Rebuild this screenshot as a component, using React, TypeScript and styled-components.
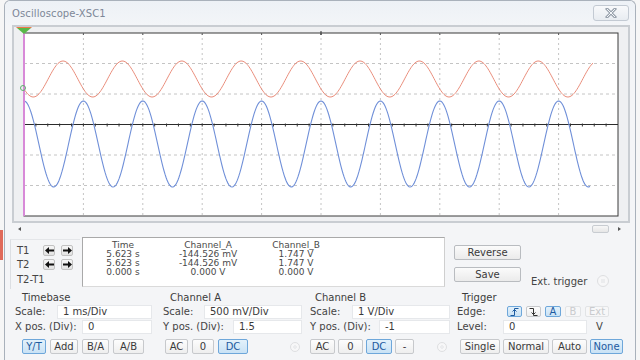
import React from 'react';
import styled, { createGlobalStyle } from 'styled-components';

const Global = createGlobalStyle`
  html, body { margin: 0; padding: 0; background: #ffffff; }
  body { font-family: "DejaVu Sans", Verdana, sans-serif; color: #3b3b3b; }
  #root { width: 640px; height: 360px; overflow: hidden; }
  * { box-sizing: border-box; }
`;

const Page = styled.div`
  width: 640px;
  height: 360px;
  display: flex;
  background: #f6f6f6;
`;

const OuterStrip = styled.div`
  width: 4px;
  display: flex;
  flex-direction: column;
  padding-top: 230px;
`;

const RedStub = styled.div`
  width: 3px;
  height: 30px;
  background: #e06a5a;
`;

const Window = styled.div`
  width: 632px;
  height: 360px;
  display: flex;
  flex-direction: column;
  border: 1px solid #a9b1bb;
  border-bottom: none;
  border-radius: 6px 6px 0 0;
  background: #f4f5f7;
`;

const TitleBar = styled.div`
  height: 24px;
  flex: none;
  display: flex;
  align-items: center;
  justify-content: space-between;
  padding: 0 6px 0 7px;
  background: linear-gradient(#edf1f6, #f3f5f8);
  border-radius: 6px 6px 0 0;
`;

const Title = styled.span`
  font-size: 10px;
  color: #7d8797;
  letter-spacing: 0.1px;
`;

const CloseBtn = styled.div`
  width: 36px;
  height: 16px;
  display: flex;
  align-items: center;
  justify-content: center;
  border: 1px solid #c3cad3;
  border-radius: 3px;
  background: linear-gradient(#f8f9fb, #e8ecf1);
`;

const Frame = styled.div`
  flex: none;
  margin-left: 7px;
  width: 618px;
  height: 198px;
  border: 2px solid #c9cdd2;
  background: #eff0f2;
  display: flex;
`;

const ScrollRow = styled.div`
  flex: none;
  height: 12px;
  display: flex;
  align-items: center;
  padding-left: 13px;
`;

const ScrollArrow = styled.span`
  width: 0;
  height: 0;
  border-top: 2px solid transparent;
  border-bottom: 2px solid transparent;
  border-right: ${(p: { $dir: 'l' | 'r' }) => (p.$dir === 'l' ? '3px solid #555' : 'none')};
  border-left: ${(p: { $dir: 'l' | 'r' }) => (p.$dir === 'r' ? '3px solid #555' : 'none')};
`;

const ScrollTrack = styled.div`
  flex: none;
  width: 597px;
  display: flex;
  justify-content: flex-end;
  padding-right: 9px;
`;

const Thumb = styled.div`
  width: 17px;
  height: 8px;
  border: 1px solid #c8ccd1;
  border-radius: 2px;
  background: linear-gradient(#f7f7f7, #e6e6e6);
`;

const ReadoutRow = styled.div`
  flex: none;
  height: 52px;
  display: flex;
  align-items: flex-start;
  padding-left: 5px;
`;

const CursorPanel = styled.div`
  width: 70px;
  height: 50px;
  margin-top: 4px;
  border-left: 1px solid #dcdfe3;
  border-top: 1px solid #e4e6e9;
  display: grid;
  grid-template-columns: 26px 18px 18px;
  grid-template-rows: 12px 12px 14px;
  row-gap: 2px;
  padding: 4px 0 0 6px;
  align-items: center;
`;

const CursorLabel = styled.span`
  font-size: 10px;
  color: #444;
  white-space: nowrap;
`;

const ArrowBtn = styled.div`
  width: 12px;
  height: 11px;
  display: flex;
  align-items: center;
  justify-content: center;
  border: 1px solid #c2c2c2;
  border-radius: 2px;
  background: linear-gradient(#f6f6f6, #e2e2e2);
`;

const DataBox = styled.div`
  width: 363px;
  height: 50px;
  margin: 2px 0 0 2px;
  border: 1px solid #a9a9a9;
  border-right-color: #cfcfcf;
  border-bottom-color: #dadada;
  background: #ffffff;
  display: grid;
  grid-template-columns: 80px 90px 86px;
  grid-auto-rows: 9px;
  padding-top: 3px;
  font-size: 9px;
  line-height: 9px;
  color: #4a4a4a;
`;

const Cell = styled.span`
  text-align: center;
  white-space: nowrap;
`;

const RightPanel = styled.div`
  margin-left: 9px;
  padding-top: 10px;
  display: flex;
  align-items: flex-end;
  gap: 10px;
`;

const BigBtnCol = styled.div`
  display: flex;
  flex-direction: column;
  gap: 7px;
`;

const BigBtn = styled.div`
  width: 67px;
  height: 15px;
  display: flex;
  align-items: center;
  justify-content: center;
  font-size: 10px;
  color: #3a3a3a;
  border: 1px solid #b9bcc0;
  border-radius: 2px;
  background: linear-gradient(#fbfbfb, #ebebeb);
`;

const ExtTrigger = styled.div`
  display: flex;
  align-items: center;
  gap: 10px;
  margin-bottom: -5px;
  font-size: 10px;
  color: #444;
`;

const FaintCircle = styled.span`
  width: ${(p: { $size: number }) => p.$size}px;
  height: ${(p: { $size: number }) => p.$size}px;
  border-radius: 50%;
  border: 1px solid #dedfe1;
  background: radial-gradient(circle, #ebecee 30%, #f7f7f8 35%);
  display: inline-block;
`;

const ControlsRow = styled.div`
  flex: none;
  display: flex;
  padding: 2px 0 0 8px;
`;

const Group = styled.div`
  width: ${(p: { $w: number }) => p.$w}px;
  display: flex;
  flex-direction: column;
  padding: 2px 0 0 2px;
`;

const GroupTitle = styled.div`
  height: 13px;
  line-height: 13px;
  padding-left: ${(p: { $indent: number }) => p.$indent}px;
  font-size: 10px;
  color: #3c3c3c;
`;

const FieldRow = styled.div`
  height: 15px;
  display: flex;
  align-items: center;
`;

const Label = styled.span`
  width: ${(p: { $w: number }) => p.$w}px;
  flex: none;
  font-size: 10px;
  color: #444;
  white-space: nowrap;
`;

const Field = styled.div`
  width: ${(p: { $w: number }) => p.$w}px;
  height: 14px;
  display: flex;
  align-items: center;
  justify-content: space-between;
  padding: 0 6px 0 5px;
  background: #ffffff;
  border: 1px solid #e6e8eb;
  font-size: 10px;
  color: #3a3a3a;
`;

const BtnRow = styled.div`
  margin-top: 5px;
  display: flex;
  align-items: center;
  gap: ${(p: { $gap: number; $pad: number }) => p.$gap}px;
  padding-left: ${(p: { $gap: number; $pad: number }) => p.$pad}px;
`;

const Btn = styled.div<{ $w: number; $active?: boolean; $disabled?: boolean; $h?: number }>`
  width: ${(p) => p.$w}px;
  height: ${(p) => p.$h ?? 15}px;
  flex: none;
  display: flex;
  align-items: center;
  justify-content: center;
  font-size: 10px;
  border-radius: 2px;
  border: 1px solid ${(p) => (p.$active ? '#6ea7da' : p.$disabled ? '#e2e4e6' : '#c7c9cc')};
  background: ${(p) =>
    p.$active ? 'linear-gradient(#e3f1fb, #c9e2f5)' : p.$disabled ? '#f7f7f8' : 'linear-gradient(#fdfdfd, #eeeeee)'};
  color: ${(p) => (p.$active ? '#1d5aa0' : p.$disabled ? '#c9cbce' : '#3a3a3a')};
`;

const Spacer = styled.div`
  width: ${(p: { $w: number }) => p.$w}px;
  flex: none;
`;

// ---------- plot ----------
const PX0 = 24;
const PX1 = 618;
const PY0 = 33;
const PY1 = 216;
const DX = (PX1 - PX0) / 10;
const DY = (PY1 - PY0) / 6;
const CY = PY0 + 3 * DY;

function wave(x0: number, x1: number, cy: number, amp: number, peakX: number) {
  const pts: string[] = [];
  for (let x = x0; x <= x1; x += 1) {
    const y = cy - amp * Math.cos((2 * Math.PI * (x - peakX)) / DX);
    pts.push(`${x.toFixed(1)},${y.toFixed(2)}`);
  }
  return 'M' + pts.join(' L');
}

const Plot: React.FC = () => {
  const vLines = Array.from({ length: 9 }, (_, i) => PX0 + (i + 1) * DX);
  const hLines = [1, 2, 4, 5].map((k) => PY0 + k * DY);
  const ticks = Array.from({ length: 49 }, (_, i) => PX0 + (i + 1) * (DX / 5));
  return (
    <svg width="614" height="194" viewBox="14 27 614 194">
      <rect x={PX0} y={PY0} width={PX1 - PX0} height={PY1 - PY0} fill="#ffffff" stroke="#3a3a3a" strokeWidth="1" />
      {vLines.map((x) => (
        <line key={'v' + x} x1={x} y1={PY0} x2={x} y2={PY1} stroke="#c4c4c4" strokeWidth="1" strokeDasharray="2 3" />
      ))}
      {hLines.map((y) => (
        <line key={'h' + y} x1={PX0} y1={y} x2={PX1} y2={y} stroke="#c4c4c4" strokeWidth="1" strokeDasharray="3 3" />
      ))}
      {vLines.map((x) => (
        <line key={'t' + x} x1={x} y1={PY0} x2={x} y2={PY0 + 2} stroke="#555" strokeWidth="1" />
      ))}
      <line x1={PX0 + 5 * DX} y1={PY0 - 2} x2={PX0 + 5 * DX} y2={PY0 + 2} stroke="#333" strokeWidth="1" />
      <line x1={PX0} y1={CY} x2={PX1} y2={CY} stroke="#2b2b2b" strokeWidth="1" />
      {ticks.map((x) => (
        <line key={'c' + x} x1={x} y1={CY - 1} x2={x} y2={CY + 2} stroke="#333" strokeWidth="1" />
      ))}
      <path d={wave(PX0, 593, 79, 18, 63)} fill="none" stroke="#ea8e7c" strokeWidth="1" />
      <path d={wave(PX0, 590, 144, 43, PX0)} fill="none" stroke="#6f8fd8" strokeWidth="1.1" />
      <line x1={PX0} y1={PY0} x2={PX0} y2={PY1} stroke="#d88ad8" strokeWidth="2" />
      <circle cx={23} cy={88} r={2.5} fill="none" stroke="#5fb070" strokeWidth="1" />
      <polygon points="15,26 33,26 31,28 17,28" fill="#ee7a4a" />
      <polygon points="17,28 31,28 24,34" fill="#59b84a" />
    </svg>
  );
};

const ArrowIcon: React.FC<{ dir: 'l' | 'r' }> = ({ dir }) => (
  <svg width="9" height="7" viewBox="0 0 9 7">
    {dir === 'l' ? (
      <path d="M0 3.5 L4 0 L4 2.5 L9 2.5 L9 4.5 L4 4.5 L4 7 Z" fill="#111" />
    ) : (
      <path d="M9 3.5 L5 0 L5 2.5 L0 2.5 L0 4.5 L5 4.5 L5 7 Z" fill="#111" />
    )}
  </svg>
);

const EdgeIcon: React.FC<{ rising: boolean; color: string }> = ({ rising, color }) => (
  <svg width="9" height="8" viewBox="0 0 9 8">
    {rising ? (
      <path d="M0.5 7.5 H4.5 V0.5 H8.5 M2.5 3.5 L4.5 1.5 L6.5 3.5" fill="none" stroke={color} strokeWidth="1" />
    ) : (
      <path d="M0.5 0.5 H4.5 V7.5 H8.5 M2.5 4.5 L4.5 6.5 L6.5 4.5" fill="none" stroke={color} strokeWidth="1" />
    )}
  </svg>
);

const CloseIcon: React.FC = () => (
  <svg width="12" height="10" viewBox="0 0 12 10">
    <path d="M2 1 L10 9 M10 1 L2 9" stroke="#9aa3ae" strokeWidth="3" strokeLinecap="square" />
    <path d="M2 1 L10 9 M10 1 L2 9" stroke="#f4f6f9" strokeWidth="1" />
  </svg>
);

const App: React.FC = () => (
  <>
    <Global />
    <Page>
      <OuterStrip>
        <RedStub />
      </OuterStrip>
      <Window>
        <TitleBar>
          <Title>Oscilloscope-XSC1</Title>
          <CloseBtn>
            <CloseIcon />
          </CloseBtn>
        </TitleBar>
        <Frame>
          <Plot />
        </Frame>
        <ScrollRow>
          <ScrollArrow $dir="l" />
          <ScrollTrack>
            <Thumb />
          </ScrollTrack>
          <ScrollArrow $dir="r" />
        </ScrollRow>
        <ReadoutRow>
          <CursorPanel>
            <CursorLabel>T1</CursorLabel>
            <ArrowBtn><ArrowIcon dir="l" /></ArrowBtn>
            <ArrowBtn><ArrowIcon dir="r" /></ArrowBtn>
            <CursorLabel>T2</CursorLabel>
            <ArrowBtn><ArrowIcon dir="l" /></ArrowBtn>
            <ArrowBtn><ArrowIcon dir="r" /></ArrowBtn>
            <CursorLabel>T2-T1</CursorLabel>
          </CursorPanel>
          <DataBox>
            <Cell>Time</Cell>
            <Cell>Channel_A</Cell>
            <Cell>Channel_B</Cell>
            <Cell>5.623 s</Cell>
            <Cell>-144.526 mV</Cell>
            <Cell>1.747 V</Cell>
            <Cell>5.623 s</Cell>
            <Cell>-144.526 mV</Cell>
            <Cell>1.747 V</Cell>
            <Cell>0.000 s</Cell>
            <Cell>0.000 V</Cell>
            <Cell>0.000 V</Cell>
          </DataBox>
          <RightPanel>
            <BigBtnCol>
              <BigBtn>Reverse</BigBtn>
              <BigBtn>Save</BigBtn>
            </BigBtnCol>
            <ExtTrigger>
              <span>Ext. trigger</span>
              <FaintCircle $size={12} />
            </ExtTrigger>
          </RightPanel>
        </ReadoutRow>
        <ControlsRow>
          <Group $w={148}>
            <GroupTitle $indent={7}>Timebase</GroupTitle>
            <FieldRow>
              <Label $w={42}>Scale:</Label>
              <Field $w={95}>1 ms/Div</Field>
            </FieldRow>
            <FieldRow>
              <Label $w={67}>X pos. (Div):</Label>
              <Field $w={70}>0</Field>
            </FieldRow>
            <BtnRow $gap={4} $pad={7}>
              <Btn $w={24} $active>Y/T</Btn>
              <Btn $w={28}>Add</Btn>
              <Btn $w={27}>B/A</Btn>
              <Btn $w={31}>A/B</Btn>
            </BtnRow>
          </Group>
          <Group $w={147}>
            <GroupTitle $indent={7}>Channel A</GroupTitle>
            <FieldRow>
              <Label $w={41}>Scale:</Label>
              <Field $w={98}>500 mV/Div</Field>
            </FieldRow>
            <FieldRow>
              <Label $w={70}>Y pos. (Div):</Label>
              <Field $w={69}>1.5</Field>
            </FieldRow>
            <BtnRow $gap={4} $pad={2}>
              <Btn $w={23}>AC</Btn>
              <Btn $w={22}>0</Btn>
              <Btn $w={30} $active>DC</Btn>
              <Spacer $w={34} />
              <FaintCircle $size={10} />
            </BtnRow>
          </Group>
          <Group $w={147}>
            <GroupTitle $indent={5}>Channel B</GroupTitle>
            <FieldRow>
              <Label $w={42}>Scale:</Label>
              <Field $w={98}>1 V/Div</Field>
            </FieldRow>
            <FieldRow>
              <Label $w={69}>Y pos. (Div):</Label>
              <Field $w={71}>-1</Field>
            </FieldRow>
            <BtnRow $gap={3} $pad={0}>
              <Btn $w={25}>AC</Btn>
              <Btn $w={25}>0</Btn>
              <Btn $w={26} $active>DC</Btn>
              <Btn $w={19}>-</Btn>
              <Spacer $w={17} />
              <FaintCircle $size={10} />
            </BtnRow>
          </Group>
          <Group $w={172}>
            <GroupTitle $indent={5}>Trigger</GroupTitle>
            <FieldRow>
              <Label $w={50}>Edge:</Label>
              <BtnRow $gap={4} $pad={0} style={{ marginTop: 0 }}>
                <Btn $w={15} $h={11} $active><EdgeIcon rising color="#1d5aa0" /></Btn>
                <Btn $w={15} $h={11}><EdgeIcon rising={false} color="#333" /></Btn>
                <Btn $w={16} $h={11} $active>A</Btn>
                <Btn $w={16} $h={11} $disabled>B</Btn>
                <Btn $w={24} $h={11} $disabled>Ext</Btn>
              </BtnRow>
            </FieldRow>
            <FieldRow>
              <Label $w={46}>Level:</Label>
              <Field $w={84}>0</Field>
              <Label $w={20} style={{ paddingLeft: 9 }}>V</Label>
            </FieldRow>
            <BtnRow $gap={3} $pad={3}>
              <Btn $w={40}>Single</Btn>
              <Btn $w={46}>Normal</Btn>
              <Btn $w={35}>Auto</Btn>
              <Btn $w={33} $active>None</Btn>
            </BtnRow>
          </Group>
        </ControlsRow>
      </Window>
    </Page>
  </>
);

export default App;
